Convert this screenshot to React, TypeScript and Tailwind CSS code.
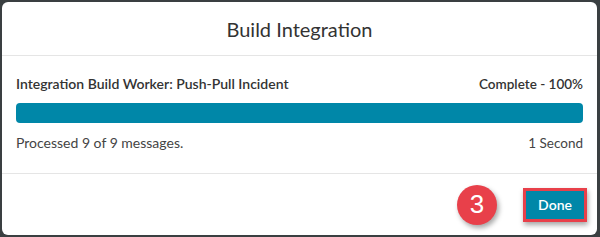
export default function App() {
  return (
    <div className="w-[600px] h-[237px] bg-[#3a3f41] pt-[2px] pl-[2px] pr-[3px] pb-[2px] font-['Lato',sans-serif] overflow-hidden">
      <div className="h-[233px] bg-white rounded-[6px] flex flex-col">
        <div className="h-[54px] flex items-center justify-center border-b border-[#e5e5e5]">
          <h1 className="text-[20px] text-[#333] leading-none">Build Integration</h1>
        </div>
        <div className="px-[14px] pt-[18px] pb-[20px] border-b border-[#e5e5e5]">
          <div className="flex justify-between text-[14px] font-semibold text-[#333] leading-[20px]">
            <span>Integration Build Worker: Push-Pull Incident</span>
            <span className="text-[13.5px]">Complete - 100%</span>
          </div>
          <div className="mt-[9px] h-[20px] rounded-[4px] bg-[#0087a8]" />
          <div className="mt-[10px] flex justify-between text-[14px] text-[#444] leading-[20px]">
            <span>Processed 9 of 9 messages.</span>
            <span className="text-[13.5px]">1 Second</span>
          </div>
        </div>
        <div className="flex-1 flex items-center justify-end pr-[10px] gap-[26px]">
          <div className="w-[40px] h-[40px] rounded-full bg-[#e8404a] text-white flex items-center justify-center text-[26px] font-['Liberation_Sans',sans-serif] shadow-[2px_3px_5px_rgba(0,0,0,0.35)]">
            3
          </div>
          <div className="border-[3px] border-[#e8404a] shadow-[1px_3px_5px_rgba(0,0,0,0.35)]">
            <button className="w-[58px] h-[28px] bg-[#0087a8] text-white text-[14px] font-semibold">
              Done
            </button>
          </div>
        </div>
      </div>
    </div>
  );
}
